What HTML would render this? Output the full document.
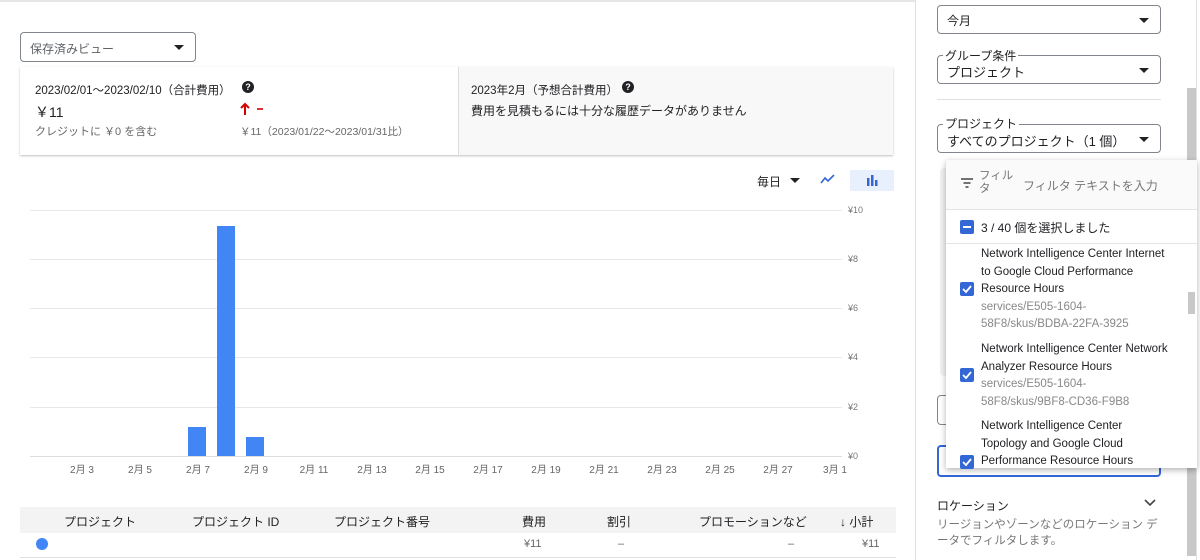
<!DOCTYPE html>
<html><head><meta charset="utf-8"><style>
*{box-sizing:border-box;margin:0;padding:0}
body{width:1200px;height:560px;overflow:hidden;background:#fff;font-family:"Liberation Sans","Noto Sans CJK JP",sans-serif;color:#202124;position:relative;font-size:13px}
.a{position:absolute}
.sel{position:absolute;border:1px solid #80868b;border-radius:4px;background:#fff}
.tri{position:absolute;width:0;height:0;border-left:5px solid transparent;border-right:5px solid transparent;border-top:5px solid #202124}
.lbl{position:absolute;background:#fff;font-size:12px;padding:0 2px;color:#202124}
.g{position:absolute;left:30px;width:812px;height:1px;background:#e8e8e8}
.yl{position:absolute;left:848px;font-size:9px;color:#777}
.xl{position:absolute;top:461px;font-size:10px;color:#666;width:40px;text-align:center}
.bar{position:absolute;background:#4285f4;width:18px}
.cb{position:absolute;left:960px;width:14px;height:14px;background:#3367d6;border-radius:2px}
.it{position:absolute;left:981px;font-size:11.5px;line-height:17.5px;color:#202124}
.it span{color:#888}
.th{position:absolute;top:513px;font-size:12px;color:#202124}
.td{position:absolute;top:538px;font-size:11px;color:#666}
</style></head><body>
<div class="a" style="left:0;top:0;width:915px;height:2px;background:#e6e6e6"></div>
<div class="a" style="left:915px;top:0;width:1px;height:560px;background:#e0e0e0"></div>

<div class="sel" style="left:20px;top:32px;width:176px;height:30px"><div class="a" style="left:9px;top:7px;font-size:12px;color:#5f6368">保存済みビュー</div><div class="tri" style="left:153px;top:12px"></div></div>

<div class="a" style="left:20px;top:67px;width:873px;height:88px;box-shadow:0 1px 2px rgba(0,0,0,.25);background:#fff"></div>
<div class="a" style="left:458px;top:67px;width:435px;height:88px;background:#f8f8f8;border-left:1px solid #ddd"></div>
<div class="a" style="left:35px;top:82px;font-size:11.5px">2023/02/01～2023/02/10（合計費用）</div>
<div class="a" style="left:242px;top:81px;width:12px;height:12px;border-radius:50%;background:#202124;color:#fff;font-size:9px;text-align:center;line-height:12px;font-weight:bold">?</div>
<div class="a" style="left:35px;top:102px;font-size:14px">￥11</div>
<svg class="a" style="left:240px;top:102px" width="30" height="14"><path d="M5 13V2M1 6l4-4 4 4" stroke="#d50000" stroke-width="2" fill="none"/><path d="M17 7h6" stroke="#d50000" stroke-width="1.6"/></svg>
<div class="a" style="left:35px;top:123px;font-size:11px;color:#666">クレジットに ￥0 を含む</div>
<div class="a" style="left:240px;top:124px;font-size:10.5px;color:#666">￥11（2023/01/22～2023/01/31比）</div>
<div class="a" style="left:471px;top:82px;font-size:11.5px">2023年2月（予想合計費用）</div>
<div class="a" style="left:622px;top:81px;width:12px;height:12px;border-radius:50%;background:#202124;color:#fff;font-size:9px;text-align:center;line-height:12px;font-weight:bold">?</div>
<div class="a" style="left:471px;top:102px;font-size:12px">費用を見積もるには十分な履歴データがありません</div>

<div class="a" style="left:757px;top:173px;font-size:12px">毎日</div>
<div class="tri" style="left:790px;top:178px"></div>
<svg class="a" style="left:820px;top:173px" width="16" height="12"><path d="M1 10 L5 5 L8 8 L14 2" stroke="#3367d6" stroke-width="1.6" fill="none"/></svg>
<div class="a" style="left:850px;top:170px;width:44px;height:21px;background:#e8f0fe"></div>
<svg class="a" style="left:866px;top:175px" width="12" height="12"><rect x="1" y="3" width="2.5" height="8" fill="#3367d6"/><rect x="5" y="0" width="2.5" height="11" fill="#3367d6"/><rect x="9" y="5" width="2.5" height="6" fill="#3367d6"/></svg>

<div class="g" style="top:210px"></div><div class="g" style="top:259px"></div><div class="g" style="top:308px"></div><div class="g" style="top:357px"></div><div class="g" style="top:407px"></div><div class="g" style="top:456px;background:#ddd"></div>
<div class="yl" style="top:205px">¥10</div><div class="yl" style="top:254px">¥8</div><div class="yl" style="top:303px">¥6</div><div class="yl" style="top:352px">¥4</div><div class="yl" style="top:402px">¥2</div><div class="yl" style="top:451px">¥0</div>
<div class="bar" style="left:188px;top:427px;height:29px"></div>
<div class="bar" style="left:217px;top:226px;height:230px"></div>
<div class="bar" style="left:246px;top:437px;height:19px"></div>
<div class="xl" style="left:62px">2月 3</div><div class="xl" style="left:120px">2月 5</div><div class="xl" style="left:178px">2月 7</div><div class="xl" style="left:236px">2月 9</div><div class="xl" style="left:294px">2月 11</div><div class="xl" style="left:352px">2月 13</div><div class="xl" style="left:410px">2月 15</div><div class="xl" style="left:468px">2月 17</div><div class="xl" style="left:526px">2月 19</div><div class="xl" style="left:584px">2月 21</div><div class="xl" style="left:642px">2月 23</div><div class="xl" style="left:700px">2月 25</div><div class="xl" style="left:758px">2月 27</div><div class="xl" style="left:815px">3月 1</div>

<div class="a" style="left:20px;top:507px;width:876px;height:26px;background:#f3f3f3"></div>
<div class="a" style="left:20px;top:557px;width:876px;height:1px;background:#e0e0e0"></div>
<div class="th" style="left:64px">プロジェクト</div><div class="th" style="left:192px">プロジェクト ID</div><div class="th" style="left:334px">プロジェクト番号</div><div class="th" style="left:522px">費用</div><div class="th" style="left:607px">割引</div><div class="th" style="left:699px">プロモーションなど</div><div class="th" style="left:840px">↓ 小計</div>
<div class="a" style="left:36px;top:538px;width:12px;height:12px;border-radius:50%;background:#4285f4"></div>
<div class="td" style="left:524px">¥11</div><div class="td" style="left:618px">–</div><div class="td" style="left:788px">–</div><div class="td" style="left:862px">¥11</div>

<!-- sidebar -->
<div class="a" style="left:1187px;top:88px;width:9px;height:468px;background:#c8c8c8"></div>
<div class="a" style="left:1196px;top:0;width:1px;height:560px;background:#e0e0e0"></div>
<div class="sel" style="left:937px;top:5px;width:224px;height:29px"><div class="a" style="left:9px;top:6px;font-size:12px">今月</div><div class="tri" style="left:201px;top:12px"></div></div>
<div class="sel" style="left:937px;top:55px;width:224px;height:29px"><div class="a" style="left:9px;top:6px;font-size:13px">プロジェクト</div><div class="tri" style="left:201px;top:12px"></div></div>
<div class="lbl" style="left:943px;top:47px">グループ条件</div>
<div class="a" style="left:937px;top:99px;width:224px;height:1px;background:#e0e0e0"></div>
<div class="sel" style="left:937px;top:124px;width:224px;height:29px"><div class="a" style="left:9px;top:6px;font-size:13px">すべてのプロジェクト（1 個）</div><div class="tri" style="left:201px;top:12px"></div></div>
<div class="lbl" style="left:943px;top:115px">プロジェクト</div>
<div class="a" style="left:940px;top:168px;width:60px;height:208px;background:#f1f1f1;border-radius:4px"></div>
<div class="sel" style="left:937px;top:395px;width:60px;height:30px"></div>
<div class="a" style="left:937px;top:445px;width:224px;height:32px;border:2px solid #3367d6;border-radius:4px"></div>
<div class="a" style="left:937px;top:497px;font-size:12px">ロケーション</div>
<svg class="a" style="left:1143px;top:498px" width="14" height="10"><path d="M2 2 L7 7 L12 2" stroke="#444" stroke-width="1.6" fill="none"/></svg>
<div class="a" style="left:937px;top:517px;font-size:11.5px;line-height:16px;color:#777;width:228px">リージョンやゾーンなどのロケーション データでフィルタします。</div>

<!-- popup -->
<div class="a" style="left:946px;top:160px;width:251px;height:308px;background:#fff;box-shadow:0 2px 6px rgba(0,0,0,.3)"></div>
<div class="a" style="left:946px;top:160px;width:251px;height:50px;background:#fafafa;border-bottom:1px solid #e4e4e4"></div>
<svg class="a" style="left:961px;top:178px" width="12" height="10"><path d="M0 1h12M2.5 5h7M4.5 9h3" stroke="#444" stroke-width="1.5"/></svg>
<div class="a" style="left:979px;top:170px;font-size:11.5px;line-height:13px;color:#777">フィル<br>タ</div>
<div class="a" style="left:1023px;top:177px;font-size:12px;color:#777">フィルタ テキストを入力</div>
<div class="cb" style="top:220px"><div class="a" style="left:3px;top:6px;width:8px;height:2px;background:#fff"></div></div>
<div class="a" style="left:981px;top:219px;font-size:12px">3 / 40 個を選択しました</div>
<div class="a" style="left:946px;top:243px;width:251px;height:1px;background:#e4e4e4"></div>
<div class="a" style="left:1188px;top:292px;width:7px;height:22px;background:#c8c8c8"></div>
<div class="it" style="top:246px">Network Intelligence Center Internet<br>to Google Cloud Performance<br>Resource Hours<br><span>services/E505-1604-<br>58F8/skus/BDBA-22FA-3925</span></div>
<div class="cb" style="top:282px"></div>
<div class="it" style="top:341px">Network Intelligence Center Network<br>Analyzer Resource Hours<br><span>services/E505-1604-<br>58F8/skus/9BF8-CD36-F9B8</span></div>
<div class="cb" style="top:368px"></div>
<div class="it" style="top:418px">Network Intelligence Center<br>Topology and Google Cloud<br>Performance Resource Hours</div>
<div class="cb" style="top:455px"></div>
<svg class="a" style="left:960px;top:282px" width="14" height="14"><path d="M3 7l3 3 5-6" stroke="#fff" stroke-width="1.8" fill="none"/></svg>
<svg class="a" style="left:960px;top:368px" width="14" height="14"><path d="M3 7l3 3 5-6" stroke="#fff" stroke-width="1.8" fill="none"/></svg>
<svg class="a" style="left:960px;top:455px" width="14" height="14"><path d="M3 7l3 3 5-6" stroke="#fff" stroke-width="1.8" fill="none"/></svg>
</body></html>
